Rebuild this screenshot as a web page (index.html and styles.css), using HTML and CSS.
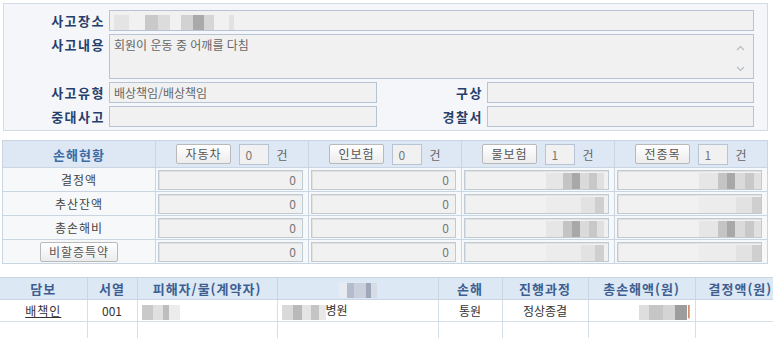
FILE: index.html
```html
<!DOCTYPE html>
<html lang="ko">
<head>
    <meta charset="UTF-8">
    <meta name="viewport" content="width=device-width, initial-scale=1.0">
    <title>사고내역</title>
    <link rel="stylesheet" href="styles.css">
</head>
<body>
    <!-- 사고 정보 -->
    <div class="accident-panel">
        <div class="field-label">사고장소</div>
        <div class="field wide"><span class="mosaic mosaic-place"></span></div>

        <div class="field-label">사고내용</div>
        <div class="field wide memo">
            <span class="memo-text">회원이 운동 중 어깨를 다침</span>
            <span class="scroll-arrows">
                <svg width="9" height="6" viewBox="0 0 9 6"><path d="M1 5 L4.5 1.5 L8 5" fill="none" stroke="#b4bcc6" stroke-width="1.2"/></svg>
                <svg width="9" height="6" viewBox="0 0 9 6"><path d="M1 1 L4.5 4.5 L8 1" fill="none" stroke="#b4bcc6" stroke-width="1.2"/></svg>
            </span>
        </div>

        <div class="field-label">사고유형</div>
        <div class="field">배상책임/배상책임</div>
        <div class="field-label">구상</div>
        <div class="field"></div>

        <div class="field-label">중대사고</div>
        <div class="field"></div>
        <div class="field-label">경찰서</div>
        <div class="field"></div>
    </div>

    <!-- 손해현황 -->
    <table class="damage-table">
        <tr>
            <th class="damage-title">손해현황</th>
            <th><span class="cell-group"><button class="btn">자동차</button><span class="count-box">0</span><span class="unit">건</span></span></th>
            <th><span class="cell-group"><button class="btn">인보험</button><span class="count-box">0</span><span class="unit">건</span></span></th>
            <th><span class="cell-group"><button class="btn">물보험</button><span class="count-box">1</span><span class="unit">건</span></span></th>
            <th><span class="cell-group"><button class="btn">전종목</button><span class="count-box">1</span><span class="unit">건</span></span></th>
        </tr>
        <tr>
            <td class="row-label">결정액</td>
            <td><div class="amount">0</div></td>
            <td><div class="amount">0</div></td>
            <td><div class="amount"><span class="mosaic mosaic-dark"></span></div></td>
            <td><div class="amount"><span class="mosaic mosaic-dark wide-blur"></span></div></td>
        </tr>
        <tr>
            <td class="row-label">추산잔액</td>
            <td><div class="amount">0</div></td>
            <td><div class="amount">0</div></td>
            <td><div class="amount"><span class="mosaic mosaic-light"></span></div></td>
            <td><div class="amount"><span class="mosaic mosaic-light wide-blur"></span></div></td>
        </tr>
        <tr>
            <td class="row-label">총손해비</td>
            <td><div class="amount">0</div></td>
            <td><div class="amount">0</div></td>
            <td><div class="amount"><span class="mosaic mosaic-dark"></span></div></td>
            <td><div class="amount"><span class="mosaic mosaic-dark wide-blur"></span></div></td>
        </tr>
        <tr>
            <td class="row-label"><button class="btn">비할증특약</button></td>
            <td><div class="amount">0</div></td>
            <td><div class="amount">0</div></td>
            <td><div class="amount"><span class="mosaic mosaic-light"></span></div></td>
            <td><div class="amount"><span class="mosaic mosaic-light wide-blur"></span></div></td>
        </tr>
    </table>

    <!-- 담보 목록 -->
    <table class="claim-table">
        <colgroup>
            <col class="col-cover">
            <col class="col-seq">
            <col class="col-victim">
            <col class="col-hidden">
            <col class="col-damage">
            <col class="col-step">
            <col class="col-total">
            <col class="col-decided">
        </colgroup>
        <tr>
            <th>담보</th>
            <th>서열</th>
            <th>피해자/물(계약자)</th>
            <th><span class="mosaic mosaic-head"></span></th>
            <th>손해</th>
            <th>진행과정</th>
            <th>총손해액(원)</th>
            <th class="cut">결정액(원)</th>
        </tr>
        <tr>
            <td><a class="cover-link">배책인</a></td>
            <td>001</td>
            <td class="left"><span class="mosaic mosaic-name"></span></td>
            <td class="left"><span class="mosaic mosaic-hosp"></span>병원</td>
            <td>통원</td>
            <td>정상종결</td>
            <td class="right"><span class="mosaic mosaic-sum"></span>|</td>
            <td></td>
        </tr>
        <tr>
            <td></td><td></td><td></td><td></td><td></td><td></td><td></td><td></td>
        </tr>
    </table>
</body>
</html>
```

FILE: styles.css
```css
* {
    box-sizing: border-box;
}

body {
    margin: 0;
    width: 773px;
    height: 338px;
    overflow: hidden;
    background-color: #fff;
    font-family: "Noto Sans CJK KR", "Noto Sans", sans-serif;
    font-size: 12px;
    color: #444;
}

/* 사고 정보 패널 */
.accident-panel {
    margin: 3px 5px 0 3px;
    padding: 6px 13px 3px 0;
    border: 1px solid #d3dce6;
    background-color: #f4f6f9;
    display: grid;
    grid-template-columns: 100px 268px 100px 267px;
    grid-template-rows: 21px 45px 21px 21px;
    gap: 3px 5px;
}

.field-label {
    text-align: right;
    font-weight: bold;
    font-size: 13px;
    line-height: 21px;
    color: #263f6c;
    letter-spacing: 1.5px;
    margin-right: -1px;
}

.field {
    border: 1px solid #b6c4d3;
    background-color: #f1f1f1;
    padding: 0 4px;
    line-height: 19px;
    color: #666;
    white-space: nowrap;
    overflow: hidden;
}

.field.wide {
    grid-column: 2 / 5;
}

.memo {
    display: flex;
    justify-content: space-between;
    padding-right: 8px;
}

.scroll-arrows {
    display: flex;
    flex-direction: column;
    justify-content: space-between;
    padding: 10px 0 6px;
}

.scroll-arrows svg {
    display: block;
}

/* 손해현황 */
.damage-table {
    margin: 9px 0 0 2px;
    width: 766px;
    border-collapse: collapse;
    table-layout: fixed;
}

.damage-table th,
.damage-table td {
    border: 1px solid #c9d5e2;
    padding: 0;
}

.damage-table th {
    height: 27px;
    background-color: #dde8f4;
    font-weight: normal;
}

.damage-table td {
    height: 23px;
    padding: 2px 5px 1px 2px;
    background-color: #f7f8fa;
}

.damage-title {
    font-weight: bold !important;
    font-size: 13px;
    color: #3b6aa6;
    letter-spacing: 1px;
}

.cell-group {
    display: inline-flex;
    align-items: center;
    gap: 8px;
}

.btn {
    height: 20px;
    padding: 0 8px;
    border: 1px solid #b9b9b9;
    border-radius: 2px;
    background: linear-gradient(#ffffff, #ececec);
    font-family: inherit;
    font-size: 12px;
    line-height: 18px;
    color: #555;
    letter-spacing: 1px;
}

.count-box {
    width: 30px;
    height: 21px;
    border: 1px solid #b6c4d3;
    background-color: #f1f1f1;
    padding-left: 6px;
    text-align: left;
    line-height: 19px;
    color: #777;
}

.unit {
    color: #666;
}

.row-label {
    text-align: center;
    color: #444;
    letter-spacing: 1px;
}

.damage-table td.row-label {
    padding: 1px 2px;
}

.amount {
    height: 20px;
    border: 1px solid #c0cad5;
    box-shadow: inset 1px 1px 0 #e2e2e2;
    background-color: #f1f1f1;
    text-align: right;
    padding-right: 6px;
    line-height: 18px;
    color: #777;
    overflow: hidden;
}

/* 가림 처리 */
.mosaic {
    display: inline-block;
    height: 15px;
    vertical-align: middle;
    filter: blur(0.6px);
}

.mosaic-place {
    width: 128px;
    background: linear-gradient(90deg, #e4e4e4 0 12%, #f1f1f1 12% 24%, #c9c9c9 24% 34%, #dcdcdc 34% 44%, #f1f1f1 44% 52%, #d2d2d2 52% 62%, #a9a9a9 62% 70%, #d6d6d6 70% 78%, #f1f1f1 78% 90%, #e2e2e2 90% 94%, #f1f1f1 94%);
}

.amount .mosaic {
    width: 58px;
    height: 18px;
    margin-right: -2px;
}

.amount .wide-blur {
    width: 62px;
    margin-right: -6px;
}

.mosaic-dark {
    background: linear-gradient(90deg, #e6e6e6 0 30%, #c4c4c4 30% 45%, #a8a8a8 45% 58%, #dadada 58% 75%, #c8c8c8 75% 88%, #e0e0e0 88%);
}

.mosaic-light {
    background: linear-gradient(90deg, #ececec 0 60%, #e2e2e2 60% 85%, #cfcfcf 85%);
}

/* 담보 목록 */
.claim-table {
    margin-top: 13px;
    width: 810px;
    border-collapse: collapse;
    table-layout: fixed;
}

.col-cover { width: 87px; }
.col-seq { width: 50px; }
.col-victim { width: 140px; }
.col-hidden { width: 161px; }
.col-damage { width: 64px; }
.col-step { width: 86px; }
.col-total { width: 107px; }
.col-decided { width: 115px; }

.claim-table th {
    height: 22px;
    padding: 0;
    background-color: #dde8f5;
    border: 1px solid #c9d5e2;
    border-left: none;
    font-size: 13px;
    font-weight: bold;
    color: #3e5e90;
    letter-spacing: 1px;
    white-space: nowrap;
    overflow: hidden;
}

.claim-table th.cut {
    text-align: left;
    padding-left: 13px;
}

.claim-table td {
    height: 22px;
    border: 1px solid #d6dee7;
    border-left: none;
    text-align: center;
    color: #333;
    padding: 0 4px;
    white-space: nowrap;
    overflow: hidden;
}

.claim-table td.left {
    text-align: left;
}

.claim-table td.right {
    text-align: right;
}

.cover-link {
    color: #333;
    text-decoration: underline;
    letter-spacing: 1px;
}

.mosaic-head {
    width: 38px;
    background: linear-gradient(90deg, #e8ecf2 0 20%, #b4bccb 20% 40%, #c9d0dc 40% 70%, #9ea8b8 70% 85%, #d6dce6 85%);
}

.mosaic-name {
    width: 38px;
    background: linear-gradient(90deg, #c9c9c9 0 30%, #e0e0e0 30% 55%, #bdbdbd 55% 70%, #ececec 70%);
}

.mosaic-hosp {
    width: 44px;
    background: linear-gradient(90deg, #d9d9d9 0 25%, #b9b9b9 25% 45%, #e4e4e4 45% 65%, #c4c4c4 65% 85%, #e8e8e8 85%);
}

.mosaic-sum {
    width: 48px;
    background: linear-gradient(90deg, #dedede 0 20%, #c6c6c6 20% 50%, #d4d4d4 50% 75%, #9d9d9d 75%);
}
```
